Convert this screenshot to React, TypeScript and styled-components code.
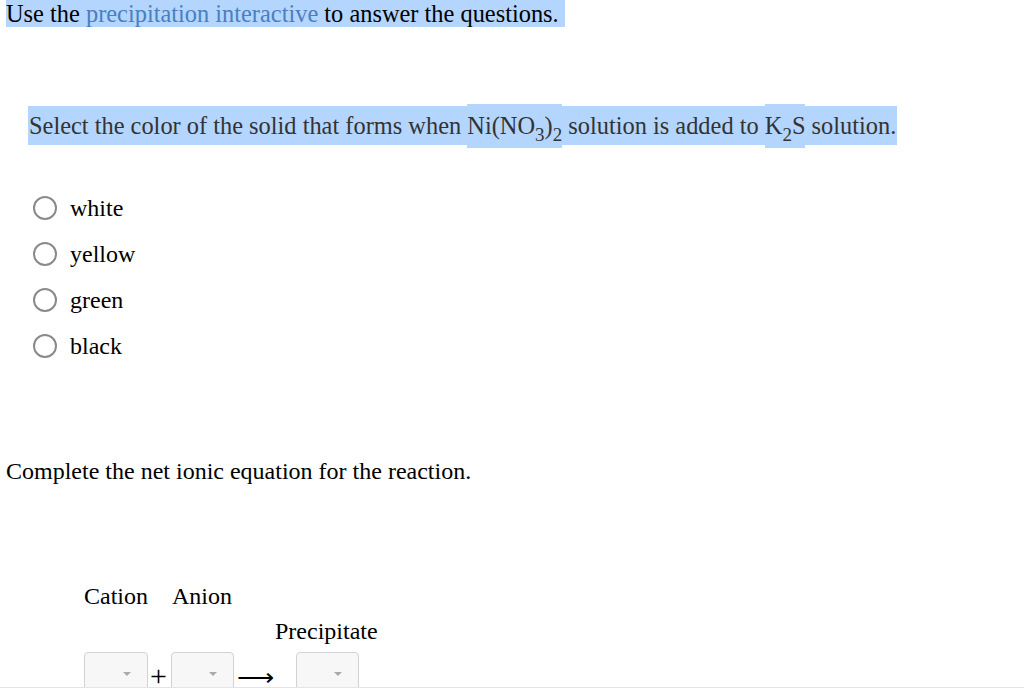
import React from "react";
import styled, { createGlobalStyle } from "styled-components";

const GlobalStyle = createGlobalStyle`
  html, body {
    margin: 0;
    padding: 0;
    background: #fff;
  }
  body {
    font-family: "Liberation Serif", "Times New Roman", serif;
    color: #000;
    overflow: hidden;
  }
`;

const Page = styled.div`
  width: 1024px;
  height: 688px;
  box-sizing: border-box;
  padding: 0 6px;
  border-bottom: 1px solid #e4e4e4;
  overflow: hidden;
`;

const Intro = styled.div`
  font-size: 24.4px;
  line-height: 27px;
`;

const Marked = styled.span<{ $pad?: string }>`
  background: #b4d5fe;
  padding: ${({ $pad }) => $pad || "0 6px 0 0"};
`;

const Link = styled.span`
  color: #4a7fc0;
`;

const Question = styled.div`
  margin: 79px 0 0 22px;
  font-size: 24.4px;
  line-height: 39px;
  color: #333;
`;

const Formula = styled.span`
  background: #b4d5fe;
  padding: 8px 0 9px;
`;

const Sub = styled.sub`
  font-size: 0.78em;
  line-height: 0;
  vertical-align: -0.36em;
`;

const Options = styled.div`
  margin: 50px 0 0 27px;
  display: flex;
  flex-direction: column;
  gap: 20px;
`;

const Option = styled.label`
  display: flex;
  align-items: center;
  gap: 13px;
  font-size: 24px;
  line-height: 26px;
`;

const Radio = styled.span`
  width: 20px;
  height: 20px;
  border: 2px solid #8a8a8a;
  border-radius: 50%;
  flex: none;
`;

const Prompt = styled.div`
  margin-top: 99px;
  font-size: 24px;
  line-height: 26px;
`;

const Equation = styled.div`
  margin: 99px 0 0 78px;
  display: grid;
  grid-template-columns: 64px 23px 63px 62px 63px;
  grid-template-rows: 27px 26px 40px;
  row-gap: 8px;
  font-size: 24px;
  line-height: 26px;
`;

const Label = styled.div<{ $col: number; $row: number; $indent?: number }>`
  grid-column: ${({ $col }) => $col};
  grid-row: ${({ $row }) => $row};
  padding-left: ${({ $indent }) => $indent || 0}px;
  white-space: nowrap;
`;

const Select = styled.div<{ $col: number }>`
  grid-column: ${({ $col }) => $col};
  grid-row: 3;
  height: 40px;
  box-sizing: border-box;
  border: 1px solid #d2d2d6;
  border-radius: 4px;
  background: #f7f7f8;
  position: relative;
  &::after {
    content: "";
    position: absolute;
    right: 16px;
    top: 19px;
    border-left: 4px solid transparent;
    border-right: 4px solid transparent;
    border-top: 4px solid #aaa;
  }
`;

const Op = styled.div<{ $col: number; $indent: number; $size: number; $top: number }>`
  grid-column: ${({ $col }) => $col};
  grid-row: 3;
  padding: ${({ $top }) => $top}px 0 0 ${({ $indent }) => $indent}px;
  font-size: ${({ $size }) => $size}px;
  line-height: 18px;
`;

const App: React.FC = () => (
  <>
    <GlobalStyle />
    <Page>
      <Intro>
        <Marked>
          Use the <Link>precipitation interactive</Link> to answer the questions.
        </Marked>
      </Intro>

      <Question>
        <Marked $pad="6px 1px">
          Select the color of the solid that forms when{" "}
          <Formula>
            Ni(NO<Sub>3</Sub>)<Sub>2</Sub>
          </Formula>{" "}
          solution is added to{" "}
          <Formula>
            K<Sub>2</Sub>S
          </Formula>{" "}
          solution.
        </Marked>
      </Question>

      <Options>
        {["white", "yellow", "green", "black"].map((o) => (
          <Option key={o}>
            <Radio />
            {o}
          </Option>
        ))}
      </Options>

      <Prompt>Complete the net ionic equation for the reaction.</Prompt>

      <Equation>
        <Label $col={1} $row={1}>Cation</Label>
        <Label $col={3} $row={1} $indent={1}>Anion</Label>
        <Label $col={4} $row={2} $indent={41}>Precipitate</Label>
        <Select $col={1} />
        <Op $col={2} $indent={2} $size={30} $top={15}>+</Op>
        <Select $col={3} />
        <Op $col={4} $indent={3} $size={26} $top={17}>⟶</Op>
        <Select $col={5} />
      </Equation>
    </Page>
  </>
);

export default App;
